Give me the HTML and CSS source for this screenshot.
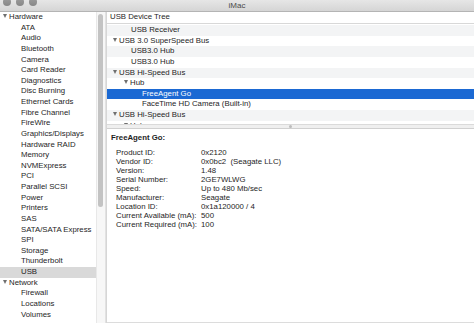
FILE: index.html
```html
<!DOCTYPE html>
<html lang="en">
<head>
  <meta charset="UTF-8" />
  <title>iMac</title>
  <link rel="stylesheet" href="styles.css">
</head>
<body>
  <div class="window">
    <div class="titlebar">
      <div class="lights">
        <span class="light"></span>
        <span class="light"></span>
        <span class="light"></span>
      </div>
      <div class="title">iMac</div>
    </div>

    <div class="main">
      <ul class="sidebar">
        <li class="group"><span class="tri"></span>Hardware</li>
        <li>ATA</li>
        <li>Audio</li>
        <li>Bluetooth</li>
        <li>Camera</li>
        <li>Card Reader</li>
        <li>Diagnostics</li>
        <li>Disc Burning</li>
        <li>Ethernet Cards</li>
        <li>Fibre Channel</li>
        <li>FireWire</li>
        <li>Graphics/Displays</li>
        <li>Hardware RAID</li>
        <li>Memory</li>
        <li>NVMExpress</li>
        <li>PCI</li>
        <li>Parallel SCSI</li>
        <li>Power</li>
        <li>Printers</li>
        <li>SAS</li>
        <li>SATA/SATA Express</li>
        <li>SPI</li>
        <li>Storage</li>
        <li>Thunderbolt</li>
        <li class="selected">USB</li>
        <li class="group"><span class="tri"></span>Network</li>
        <li>Firewall</li>
        <li>Locations</li>
        <li>Volumes</li>
      </ul>

      <div class="scrollbar"><div class="thumb"></div></div>

      <div class="content">
        <div class="tree">
          <div class="tree-head">USB Device Tree</div>
          <ul class="tree-body">
            <li class="lvl1">USB Receiver</li>
            <li class="lvl0"><span class="tri"></span>USB 3.0 SuperSpeed Bus</li>
            <li class="lvl1">USB3.0 Hub</li>
            <li class="lvl1">USB3.0 Hub</li>
            <li class="lvl0"><span class="tri"></span>USB Hi-Speed Bus</li>
            <li class="lvl1"><span class="tri"></span>Hub</li>
            <li class="lvl2 selected">FreeAgent Go</li>
            <li class="lvl2">FaceTime HD Camera (Built-in)</li>
            <li class="lvl0"><span class="tri"></span>USB Hi-Speed Bus</li>
            <li class="lvl1"><span class="tri"></span>Hub</li>
          </ul>
        </div>

        <div class="splitter"><span class="grip"></span></div>

        <div class="detail">
          <div class="detail-title">FreeAgent Go:</div>
          <dl class="props">
            <dt>Product ID:</dt><dd>0x2120</dd>
            <dt>Vendor ID:</dt><dd>0x0bc2&nbsp; (Seagate LLC)</dd>
            <dt>Version:</dt><dd>1.48</dd>
            <dt>Serial Number:</dt><dd>2GE7WLWG</dd>
            <dt>Speed:</dt><dd>Up to 480 Mb/sec</dd>
            <dt>Manufacturer:</dt><dd>Seagate</dd>
            <dt>Location ID:</dt><dd>0x1a120000 / 4</dd>
            <dt>Current Available (mA):</dt><dd>500</dd>
            <dt>Current Required (mA):</dt><dd>100</dd>
          </dl>
        </div>
      </div>
    </div>
  </div>
</body>
</html>
```

FILE: styles.css
```css
html, body {
  margin: 0;
  padding: 0;
  background: #fff;
}
body {
  font-family: 'Liberation Sans', Arial, sans-serif;
  font-size: 7.8px;
  color: #1e1e1e;
}
ul, dl, dd {
  margin: 0;
  padding: 0;
  list-style: none;
}
.window {
  width: 474px;
  height: 323px;
  overflow: hidden;
  display: flex;
  flex-direction: column;
}
.titlebar {
  height: 11px;
  flex: none;
  background: linear-gradient(to bottom, #e6e6e6, #d5d5d5);
  border-bottom: 1px solid #b4b4b4;
  display: grid;
  grid-template-columns: 1fr auto 1fr;
  align-items: start;
}
.lights {
  display: flex;
  gap: 5px;
  padding-left: 3px;
  margin-top: -2px;
}
.light {
  width: 8px;
  height: 8px;
  border-radius: 50%;
  background: linear-gradient(to bottom, #9c9c9c, #878787);
}
.title {
  color: #4a4a4a;
  line-height: 11px;
  font-size: 8px;
}
.main {
  flex: 1;
  display: flex;
  min-height: 0;
}

/* sidebar */
.sidebar {
  width: 96px;
  flex: none;
}
.sidebar li {
  height: 10.63px;
  line-height: 10.63px;
  padding-left: 21px;
  white-space: nowrap;
}
.sidebar li.group {
  padding-left: 3px;
}
.sidebar li.selected {
  background: #d9d9d9;
}
.tri {
  display: inline-block;
  width: 0;
  height: 0;
  border-left: 2.5px solid transparent;
  border-right: 2.5px solid transparent;
  border-top: 4px solid #6f6f6f;
  margin-right: 2px;
  vertical-align: 1px;
}
.scrollbar {
  width: 10px;
  flex: none;
  box-sizing: border-box;
  background: #f7f7f7;
  border-left: 1px solid #e8e8e8;
  border-right: 1px solid #e2e2e2;
  padding: 2px 0 0 1px;
}
.thumb {
  width: 5px;
  height: 193px;
  border-radius: 3px;
  background: #c3c3c3;
}

/* content */
.content {
  flex: 1;
  display: flex;
  flex-direction: column;
  border-left: 1px solid #d6d6d6;
  min-width: 0;
}
.tree {
  height: 112px;
  flex: none;
  overflow: hidden;
}
.tree-head {
  height: 10.6px;
  line-height: 10.6px;
  padding-left: 3px;
  border-bottom: 1px solid #d8d8d8;
}
.tree-body {
  padding-top: 1.6px;
}
.tree-body li {
  height: 10.6px;
  line-height: 10.6px;
  white-space: nowrap;
}
.tree-body li:nth-child(odd) {
  background: #f3f4f5;
}
.tree-body li.selected {
  background: #1b69d3;
  color: #fff;
}
.tree-body .lvl0 { padding-left: 6px; }
.tree-body .lvl1 { padding-left: 17px; }
.tree-body .lvl2 { padding-left: 35px; }
.tree-body .lvl1:not(:has(.tri)) { padding-left: 24px; }
.splitter {
  height: 3px;
  flex: none;
  background: #efefef;
  border-top: 1px solid #dadada;
  border-bottom: 1px solid #d0d0d0;
  display: flex;
  justify-content: center;
  align-items: center;
}
.grip {
  width: 3px;
  height: 3px;
  border-radius: 50%;
  background: #bcbcbc;
}
.detail {
  flex: 1;
  padding: 4px 0 0 4px;
  border-bottom: 1px solid #dcdcdc;
}
.detail-title {
  font-weight: bold;
  line-height: 9px;
}
.props {
  margin-top: 7.3px;
  display: grid;
  grid-template-columns: 85px auto;
  line-height: 8.93px;
  padding-left: 5px;
}
.props dt, .props dd {
  white-space: pre;
}
```
